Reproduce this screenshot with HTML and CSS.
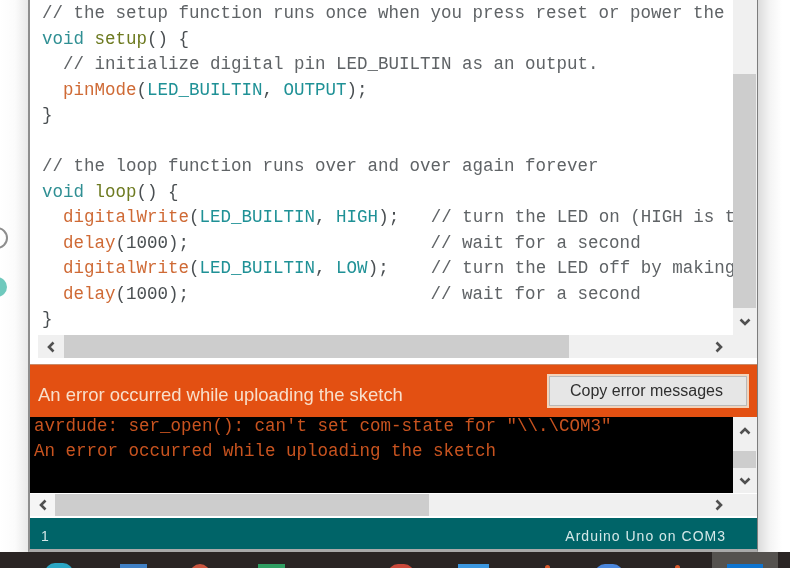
FILE: index.html
```html
<!DOCTYPE html>
<html lang="en">
<head>
<meta charset="utf-8">
<title>Arduino IDE upload error</title>
<link rel="stylesheet" href="styles.css">
</head>
<body>
<div class="desktop">
  <div class="strip-left">
    <svg class="desk-shapes" width="28" height="75" viewBox="0 0 28 75">
      <circle cx="-3" cy="13" r="10" fill="none" stroke="#8d8d8d" stroke-width="2"/>
      <circle cx="-3" cy="62" r="10" fill="#6fc9bd"/>
    </svg>
  </div>
  <main class="window">
    <div class="editor-row">
      <pre class="code"><span class="c">// the setup function runs once when you press reset or power the board</span>
<span class="k">void</span> <span class="f">setup</span>() {
  <span class="c">// initialize digital pin LED_BUILTIN as an output.</span>
  <span class="o">pinMode</span>(<span class="t">LED_BUILTIN</span>, <span class="t">OUTPUT</span>);
}

<span class="c">// the loop function runs over and over again forever</span>
<span class="k">void</span> <span class="f">loop</span>() {
  <span class="o">digitalWrite</span>(<span class="t">LED_BUILTIN</span>, <span class="t">HIGH</span>);   <span class="c">// turn the LED on (HIGH is the voltage level)</span>
  <span class="o">delay</span>(1000);                       <span class="c">// wait for a second</span>
  <span class="o">digitalWrite</span>(<span class="t">LED_BUILTIN</span>, <span class="t">LOW</span>);    <span class="c">// turn the LED off by making the voltage LOW</span>
  <span class="o">delay</span>(1000);                       <span class="c">// wait for a second</span>
}</pre>
      <div class="vscroll editor-v">
        <div class="v-space-top"></div>
        <div class="v-thumb editor-thumb"></div>
        <div class="v-arrow"><svg width="12" height="10" viewBox="0 0 12 10"><path class="chev" d="M1.5 2.5 6 7l4.5-4.5"/></svg></div>
      </div>
    </div>
    <div class="hscroll editor-h">
      <div class="h-arrow"><svg width="10" height="12" viewBox="0 0 10 12"><path class="chev" d="M7.5 1.5 3 6l4.5 4.5"/></svg></div>
      <div class="h-thumb editor-h-thumb"></div>
      <div class="h-space"></div>
      <div class="h-arrow"><svg width="10" height="12" viewBox="0 0 10 12"><path class="chev" d="M2.5 1.5 7 6l-4.5 4.5"/></svg></div>
      <div class="corner"></div>
    </div>
    <div class="gap"></div>
    <div class="notice">
      <span class="notice-text">An error occurred while uploading the sketch</span>
      <button class="copy" type="button">Copy error messages</button>
    </div>
    <div class="console-row">
      <pre class="console"><span class="console-lines">avrdude: ser_open(): can't set com-state for "\\.\COM3"
An error occurred while uploading the sketch</span></pre>
      <div class="vscroll console-v">
        <div class="v-arrow up-arrow"><svg width="12" height="10" viewBox="0 0 12 10"><path class="chev" d="M1.5 7.5 6 3l4.5 4.5"/></svg></div>
        <div class="v-thumb console-thumb"></div>
        <div class="v-arrow"><svg width="12" height="10" viewBox="0 0 12 10"><path class="chev" d="M1.5 2.5 6 7l4.5-4.5"/></svg></div>
      </div>
    </div>
    <div class="hscroll console-h">
      <div class="h-arrow console-arrow"><svg width="10" height="12" viewBox="0 0 10 12"><path class="chev" d="M7.5 1.5 3 6l4.5 4.5"/></svg></div>
      <div class="h-thumb console-h-thumb"></div>
      <div class="h-space"></div>
      <div class="h-arrow"><svg width="10" height="12" viewBox="0 0 10 12"><path class="chev" d="M2.5 1.5 7 6l-4.5 4.5"/></svg></div>
      <div class="corner"></div>
    </div>
    <footer class="status">
      <span class="line-no">1</span>
      <span class="board">Arduino Uno on COM3</span>
    </footer>
  </main>
  <div class="strip-right"></div>
</div>
<div class="taskbar">
  <span class="tb i1"></span>
  <span class="tb i2"></span>
  <span class="tb i3"></span>
  <span class="tb i4"></span>
  <span class="tb i5"></span>
  <span class="tb i6"></span>
  <span class="tb i7"></span>
  <span class="tb i8"></span>
  <span class="tb i9"></span>
  <span class="active"><span class="tb i10"></span></span>
</div>
</body>
</html>
```
FILE: styles.css
```css
* { box-sizing: border-box; }
html, body { margin: 0; padding: 0; }
body {
  width: 790px;
  height: 568px;
  overflow: hidden;
  display: flex;
  flex-direction: column;
  background: #fff;
  filter: blur(0.5px);
}
.desktop { display: flex; height: 552px; flex: none; }
.strip-left {
  width: 28px;
  flex: none;
  padding-top: 225px;
  background: linear-gradient(to right, #fff 0, #fbfbfb 15px, #e9e9e9 28px);
}
.desk-shapes { display: block; }
.strip-right {
  flex: 1;
  background: linear-gradient(to right, #dcdcdc 0, #f4f4f4 12px, #fff 24px);
}
.window {
  width: 730px;
  flex: none;
  display: flex;
  flex-direction: column;
  border-left: 2px solid #8e8e8e;
  border-right: 1px solid #7d7d7d;
  border-bottom: 3px solid #a9a9a9;
  background: #fff;
}
.editor-row { display: flex; height: 335px; flex: none; }
.code, .console {
  margin: 0;
  flex: 1;
  min-width: 0;
  overflow: hidden;
  font-family: "Liberation Mono", monospace;
  font-size: 17.5px;
  white-space: pre;
}
.code {
  padding: 1px 0 0 12px;
  line-height: 25.5px;
  color: #4a4f52;
  background: #fff;
}
.c { color: #5f6366; }
.k { color: #2f8f93; }
.f { color: #6d7a20; }
.o { color: #cf6a35; }
.t { color: #1f9196; }
.vscroll {
  width: 24px;
  flex: none;
  display: flex;
  flex-direction: column;
  background: #f0f0f0;
}
.v-space-top { height: 74px; flex: none; }
.v-thumb { background: #cdcdcd; margin-right: 1px; flex: none; }
.editor-thumb { height: 234px; }
.v-arrow { flex: 1; display: flex; align-items: center; justify-content: center; }
.up-arrow { flex: none; height: 34px; padding-bottom: 6px; }
.v-arrow svg, .h-arrow svg { display: block; }
.chev { fill: none; stroke: #505050; stroke-width: 2.6; }
.hscroll { display: flex; flex: none; background: #f0f0f0; }
.editor-h { height: 23px; margin-left: 8px; }
.h-arrow { width: 26px; flex: none; display: flex; align-items: center; justify-content: center; }
.h-thumb { background: #cdcdcd; flex: none; }
.editor-h-thumb { width: 505px; }
.h-space { flex: 1; }
.corner { width: 25px; flex: none; }
.gap {
  height: 7px;
  flex: none;
  background: #fff;
  border-bottom: 1px solid #c98a68;
}
.notice {
  height: 52px;
  flex: none;
  display: flex;
  align-items: center;
  justify-content: space-between;
  padding: 0 8px 0 8px;
  background: #e35012;
}
.notice-text {
  padding-top: 8px;
  font-family: "Liberation Sans", sans-serif;
  font-size: 18.45px;
  color: #f8dfcb;
}
.copy {
  width: 202px;
  height: 34px;
  padding: 0 3px 0 0;
  font-family: "Liberation Sans", sans-serif;
  font-size: 16px;
  color: #2f2f2f;
  background: #e6e6e6;
  border: 2px solid #f2d3bb;
  outline: 1px solid #b9b9b9;
  outline-offset: -3px;
}
.console-row { display: flex; height: 76px; flex: none; background: #000; }
.console {
  padding: 0 0 0 4px;
  color: #c8531f;
  background: #000;
  margin-right: 2px;
}
.console-lines {
  display: block;
  margin-top: -3px;
  line-height: 25.3px;
}
.console-v { background: #f0f0f0; }
.console-thumb { height: 17px; }
.console-h {
  height: 25px;
  border-top: 1px solid #fff;
  border-bottom: 2px solid #fff;
}
.console-arrow { width: 25px; background: #f5f5f5; }
.console-h-thumb { width: 374px; }
.status {
  height: 31px;
  flex: none;
  display: flex;
  align-items: center;
  justify-content: space-between;
  padding: 4px 31px 0 11px;
  background: #006468;
  font-family: "Liberation Sans", sans-serif;
  font-size: 14px;
  color: #d4e8e8;
}
.board { letter-spacing: 1px; }
.taskbar {
  height: 16px;
  flex: none;
  display: flex;
  align-items: flex-start;
  overflow: hidden;
  background: #2a2524;
}
.tb { display: block; height: 10px; flex: none; margin-top: 12px; }
.i1 { width: 28px; margin-left: 45px; border-radius: 14px 14px 0 0; background: #2aa6c4; margin-top: 11px; }
.i2 { width: 27px; margin-left: 47px; background: #3f7fc4; }
.i3 { width: 20px; margin-left: 43px; border-radius: 10px 10px 0 0; background: #c9553f; }
.i4 { width: 27px; margin-left: 48px; background: #2f9e62; }
.i5 { width: 26px; margin-left: 103px; border-radius: 13px 13px 0 0; background: #c9483a; }
.i6 { width: 31px; margin-left: 44px; background: #3b97e0; }
.i7 { width: 5px; margin-left: 56px; border-radius: 3px 3px 0 0; background: #d9582b; margin-top: 13px; }
.i8 { width: 28px; margin-left: 45px; border-radius: 12px 12px 0 0; background: #4a86dc; }
.i9 { width: 5px; margin-left: 52px; border-radius: 3px 3px 0 0; background: #d9582b; margin-top: 13px; }
.active {
  display: block;
  width: 66px;
  height: 16px;
  flex: none;
  margin-left: 32px;
  padding-left: 15px;
  background: #55524f;
}
.i10 { width: 36px; background: #0f74cf; }
```
